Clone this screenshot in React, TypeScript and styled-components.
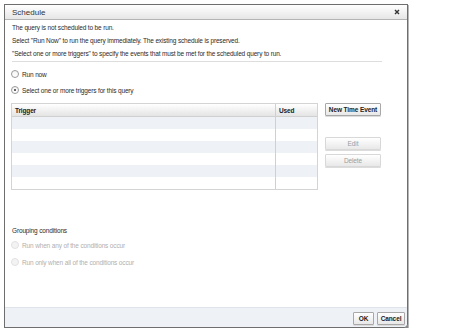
import React from "react";
import styled, { createGlobalStyle } from "styled-components";

const GlobalStyle = createGlobalStyle`
  html, body {
    margin: 0;
    padding: 0;
    background: #ffffff;
  }
  body {
    font-family: "Liberation Sans", Arial, sans-serif;
    color: #2b2b2b;
  }
`;

const Page = styled.div`
  padding: 4px 0 0 4px;
`;

const Dialog = styled.div`
  position: relative;
  box-sizing: border-box;
  width: 404px;
  height: 324px;
  border: 1px solid #6e6e6e;
  box-shadow: 1px 1px 0 #b8b8b8;
  background: #ffffff;
  display: flex;
  flex-direction: column;
`;

const TitleBar = styled.div`
  height: 15px;
  box-sizing: border-box;
  border-bottom: 1px solid #b4b4b4;
  background: linear-gradient(#ffffff, #e6e6e6);
  display: flex;
  align-items: center;
  justify-content: space-between;
  padding: 0 6px 0 7px;
`;

const Title = styled.div`
  font-size: 8px;
  color: #333;
`;

const CloseButton = styled.button`
  border: none;
  background: none;
  padding: 0;
  width: 8px;
  height: 8px;
  display: flex;
  align-items: center;
  justify-content: center;
  cursor: pointer;
`;

const Body = styled.div`
  flex: 1;
  padding: 1px 25px 0 7px;
  display: flex;
  flex-direction: column;
  font-size: 6.5px;
  letter-spacing: -0.15px;
`;

const InfoLine = styled.div`
  line-height: 13px;
  white-space: nowrap;
`;

const Separator = styled.div`
  height: 0;
  border-bottom: 1px solid #dddddd;
  margin-top: 1px;
`;

const RadioRow = styled.label<{ $top: number; $disabled?: boolean }>`
  display: flex;
  align-items: center;
  height: 14px;
  margin-top: ${(p) => p.$top}px;
  color: ${(p) => (p.$disabled ? "#b0b0b0" : "#2b2b2b")};
  gap: 3px;
`;

const RadioDot = styled.span<{ $checked?: boolean; $disabled?: boolean }>`
  box-sizing: border-box;
  width: 8px;
  height: 8px;
  border-radius: 50%;
  border: 1px solid ${(p) => (p.$disabled ? "#e2e2e2" : "#9a9a9a")};
  background: ${(p) =>
    p.$disabled ? "#f3f3f3" : "linear-gradient(#f4f4f4, #ffffff)"};
  display: flex;
  align-items: center;
  justify-content: center;
  margin-left: -1px;
  &::after {
    content: "";
    display: ${(p) => (p.$checked ? "block" : "none")};
    width: 2px;
    height: 2px;
    border-radius: 50%;
    background: #333;
  }
`;

const TableArea = styled.div`
  display: flex;
  gap: 7px;
  margin-top: 6px;
  margin-left: -1px;
`;

const Table = styled.div`
  width: 307px;
  border: 1px solid #d4d4d4;
  box-sizing: border-box;
`;

const HeaderRow = styled.div`
  display: grid;
  grid-template-columns: 263px 1fr;
  height: 13px;
  background: linear-gradient(#ffffff, #e4e4e4);
  border-bottom: 1px solid #d0d0d0;
  box-sizing: border-box;
  font-weight: bold;
  color: #222;
`;

const HeaderCell = styled.div`
  display: flex;
  align-items: center;
  padding-left: 3px;
  & + & {
    border-left: 1px solid #d0d0d0;
  }
`;

const Row = styled.div<{ $shaded: boolean }>`
  display: grid;
  grid-template-columns: 263px 1fr;
  height: 12px;
  background: ${(p) => (p.$shaded ? "#eef1f6" : "#ffffff")};
`;

const Cell = styled.div`
  & + & {
    border-left: 1px solid #d0d0d0;
  }
`;

const ButtonColumn = styled.div`
  display: flex;
  flex-direction: column;
  width: 56px;
`;

const Button = styled.button<{ $top?: number; $disabled?: boolean; $width?: number }>`
  height: 13px;
  width: ${(p) => (p.$width ? `${p.$width}px` : "100%")};
  margin-top: ${(p) => p.$top ?? 0}px;
  padding: 0;
  border: 1px solid ${(p) => (p.$disabled ? "#d8d8d8" : "#a8a8a8")};
  border-radius: 1px;
  background: linear-gradient(#ffffff, #e8e8e8);
  font-family: "Liberation Sans", Arial, sans-serif;
  font-size: 6.5px;
  letter-spacing: -0.1px;
  font-weight: ${(p) => (p.$disabled ? "normal" : "bold")};
  color: ${(p) => (p.$disabled ? "#9c9c9c" : "#222")};
  box-shadow: 0 1px 0 #dcdcdc;
  cursor: pointer;
`;

const GroupLabel = styled.div`
  line-height: 13px;
  margin-top: 34px;
  color: #2b2b2b;
`;

const Footer = styled.div`
  height: 20px;
  box-sizing: border-box;
  border-top: 1px solid #dfe4ea;
  background: #eef1f5;
  display: flex;
  justify-content: flex-end;
  align-items: center;
  gap: 3px;
  padding: 1px 2px 0 0;
`;

const Grip = styled.svg`
  position: absolute;
  right: -1px;
  bottom: -1px;
`;

const rows = [0, 1, 2, 3, 4, 5];

export default function App() {
  return (
    <Page>
      <GlobalStyle />
      <Dialog>
        <TitleBar>
          <Title>Schedule</Title>
          <CloseButton>
            <svg width="6" height="6" viewBox="0 0 6 6">
              <path d="M1 1 L5 5 M5 1 L1 5" stroke="#333" strokeWidth="1.4" />
            </svg>
          </CloseButton>
        </TitleBar>
        <Body>
          <InfoLine>The query is not scheduled to be run.</InfoLine>
          <InfoLine>
            Select "Run Now" to run the query immediately. The existing schedule is preserved.
          </InfoLine>
          <InfoLine>
            "Select one or more triggers" to specify the events that must be met for the scheduled query to run.
          </InfoLine>
          <Separator />
          <RadioRow $top={5}>
            <RadioDot />
            Run now
          </RadioRow>
          <RadioRow $top={2}>
            <RadioDot $checked />
            Select one or more triggers for this query
          </RadioRow>
          <TableArea>
            <Table>
              <HeaderRow>
                <HeaderCell>Trigger</HeaderCell>
                <HeaderCell>Used</HeaderCell>
              </HeaderRow>
              {rows.map((r) => (
                <Row key={r} $shaded={r % 2 === 0}>
                  <Cell />
                  <Cell />
                </Row>
              ))}
            </Table>
            <ButtonColumn>
              <Button>New Time Event</Button>
              <Button $top={21} $disabled>
                Edit
              </Button>
              <Button $top={4} $disabled>
                Delete
              </Button>
            </ButtonColumn>
          </TableArea>
          <GroupLabel>Grouping conditions</GroupLabel>
          <RadioRow $top={1} $disabled>
            <RadioDot $disabled />
            Run when any of the conditions occur
          </RadioRow>
          <RadioRow $top={3} $disabled>
            <RadioDot $disabled />
            Run only when all of the conditions occur
          </RadioRow>
        </Body>
        <Footer>
          <Button $width={21}>OK</Button>
          <Button $width={28}>Cancel</Button>
        </Footer>
        <Grip width="4" height="4" viewBox="0 0 4 4">
          <path d="M4 0 L4 4 L0 4 Z" fill="#8a8a8a" />
        </Grip>
      </Dialog>
    </Page>
  );
}
